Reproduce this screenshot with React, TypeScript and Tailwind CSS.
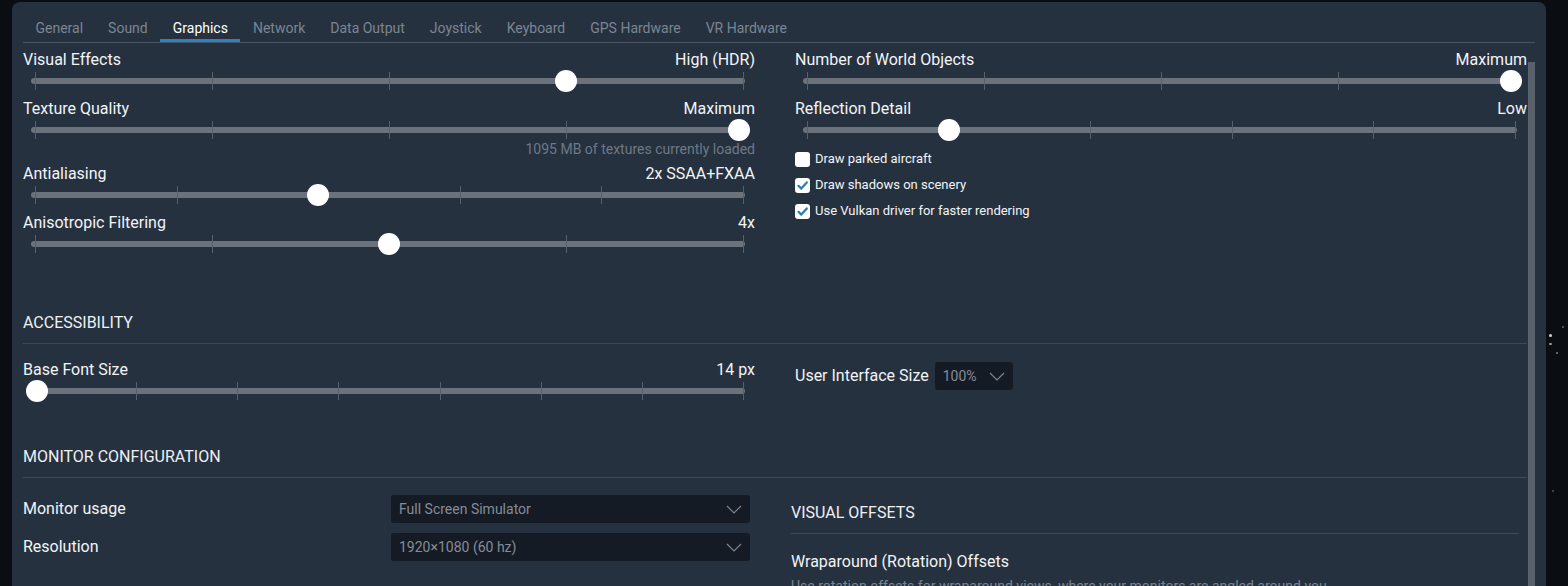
import React from 'react';

interface SliderProps {
  label: string;
  value: string;
  ticks: number;
  index: number;
  note?: string;
}

const tabs = ['General', 'Sound', 'Graphics', 'Network', 'Data Output', 'Joystick', 'Keyboard', 'GPS Hardware', 'VR Hardware'];

// track spans 708px between the first and last tick
const Slider: React.FC<SliderProps> = ({ label, value, ticks, index, note }) => {
  const step = 708 / (ticks - 1);
  const center = Math.min(Math.max(12 + index * step, 14), 716);
  return (
    <div className="flex flex-col">
      <div className="flex h-5 items-center justify-between text-[16px] leading-5 text-[#f2f4f6]">
        <span>{label}</span>
        <span>{value}</span>
      </div>
      <div className="relative h-[22px]">
        <div className="absolute left-[8px] right-[10px] top-[8px] h-[6px] rounded-full bg-[#6b727b]" />
        {Array.from({ length: ticks }).map((_, i) => (
          <div
            key={i}
            className="absolute top-[2px] h-[18px] w-px bg-[#56606c]"
            style={{ left: Math.round(12 + i * step) }}
          />
        ))}
        <div
          className="absolute top-0 h-[22px] w-[22px] rounded-full bg-white"
          style={{ left: Math.round(center - 11) }}
        />
      </div>
      {note && <div className="h-4 text-right text-[14px] leading-4 text-[#6e7884]">{note}</div>}
    </div>
  );
};

const Check: React.FC<{ label: string; checked?: boolean }> = ({ label, checked }) => (
  <div className="flex h-[26px] items-center gap-[5px] text-[13px] text-[#f2f4f6]">
    <div className="flex h-[15px] w-[15px] items-center justify-center rounded-[3px] bg-white">
      {checked && (
        <svg width="13" height="13" viewBox="0 0 13 13">
          <path d="M2.5 6.8 L5.3 9.6 L10.8 3.4" fill="none" stroke="#2b7bb4" strokeWidth="2.2" strokeLinecap="round" strokeLinejoin="round" />
        </svg>
      )}
    </div>
    <span>{label}</span>
  </div>
);

const Chevron = () => (
  <svg width="16" height="9" viewBox="0 0 16 9">
    <path d="M1 1 L8 8 L15 1" fill="none" stroke="#7d8590" strokeWidth="1.2" />
  </svg>
);

const Select: React.FC<{ text: string; className: string }> = ({ text, className }) => (
  <div className={`flex h-[28px] items-center justify-between rounded-[3px] bg-[#151b25] pl-[8px] pr-[8px] text-[14px] text-[#858c96] ${className}`}>
    <span>{text}</span>
    <Chevron />
  </div>
);

const SectionHeader: React.FC<{ title: string; className: string }> = ({ title, className }) => (
  <div className={`border-b border-[#3e4857] pb-[10px] text-[16px] uppercase leading-5 text-[#eef0f2] ${className}`}>
    {title}
  </div>
);

export default function App() {
  return (
    <div className="relative h-[586px] w-full overflow-hidden bg-[#0a0d12] font-['Roboto',sans-serif]">
      {/* faint city lights behind the window */}
      <div className="absolute left-[1549px] top-[334px] h-[3px] w-[3px] rounded-full bg-[#d8d2c0]" />
      <div className="absolute left-[1549px] top-[343px] h-[2px] w-[3px] rounded-full bg-[#a49a86]" />
      <div className="absolute left-[1556px] top-[352px] h-[2px] w-[2px] rounded-full bg-[#8a7f6a]" />
      <div className="absolute left-[1562px] top-[326px] h-[2px] w-[2px] rounded-full bg-[#6f6656]" />
      <div className="absolute left-[1552px] top-[490px] h-[2px] w-[2px] rounded-full bg-[#5e5648]" />

      <div className="ml-[12px] mt-[2px] flex h-[584px] w-[1534px] flex-col rounded-t-[8px] bg-[#263140]">
        <div className="mx-[11px] flex h-[41px] border-b border-[#4a5462]">
          {tabs.map((t) => (
            <div
              key={t}
              className={`h-full px-[12.5px] pt-[16px] text-[14px] leading-5 ${
                t === 'Graphics' ? 'border-b-[3px] border-[#2c82c0] text-white' : 'text-[#7b8592]'
              }`}
            >
              {t}
            </div>
          ))}
        </div>

        <div className="flex min-h-0 flex-1">
          <div className="w-[1504px] shrink-0 ml-[11px]">
            <div className="flex gap-[40px] pt-[7px]">
              <div className="flex w-[732px] flex-col gap-[7px]">
                <Slider label="Visual Effects" value="High (HDR)" ticks={5} index={3} />
                <Slider label="Texture Quality" value="Maximum" ticks={5} index={4} note="1095 MB of textures currently loaded" />
                <Slider label="Antialiasing" value="2x SSAA+FXAA" ticks={6} index={2} />
                <Slider label="Anisotropic Filtering" value="4x" ticks={5} index={2} />
              </div>
              <div className="flex w-[732px] flex-col">
                <div className="flex flex-col gap-[7px]">
                  <Slider label="Number of World Objects" value="Maximum" ticks={5} index={4} />
                  <Slider label="Reflection Detail" value="Low" ticks={6} index={1} />
                </div>
                <div className="flex flex-col pt-[5px]">
                  <Check label="Draw parked aircraft" />
                  <Check label="Draw shadows on scenery" checked />
                  <Check label="Use Vulkan driver for faster rendering" checked />
                </div>
              </div>
            </div>

            <SectionHeader title="Accessibility" className="mt-[58px]" />
            <div className="flex gap-[40px] pt-[16px]">
              <div className="w-[732px]">
                <Slider label="Base Font Size" value="14 px" ticks={8} index={0} />
              </div>
              <div className="flex w-[732px] items-center gap-[6px] pt-[2px] self-start text-[16px] text-[#f2f4f6]">
                <span>User Interface Size</span>
                <Select text="100%" className="w-[78px] text-[#757d88]" />
              </div>
            </div>

            <SectionHeader title="Monitor Configuration" className="mt-[45px]" />
            <div className="flex gap-[41px]">
              <div className="flex w-[727px] flex-col gap-[10px] pt-[17px]">
                <div className="flex items-center text-[16px] text-[#f2f4f6]">
                  <span className="w-[368px]">Monitor usage</span>
                  <Select text="Full Screen Simulator" className="w-[359px]" />
                </div>
                <div className="flex items-center text-[16px] text-[#f2f4f6]">
                  <span className="w-[368px]">Resolution</span>
                  <Select text="1920×1080 (60 hz)" className="w-[359px]" />
                </div>
              </div>
              <div className="flex w-[728px] flex-col pt-[25px]">
                <SectionHeader title="Visual Offsets" className="" />
                <div className="mt-[18px] text-[16px] leading-5 text-[#f2f4f6]">Wraparound (Rotation) Offsets</div>
                <div className="mt-[6px] text-[14px] leading-4 text-[#7a838e]">
                  Use rotation offsets for wraparound views, where your monitors are angled around you.
                </div>
              </div>
            </div>
          </div>
          <div className="ml-[1px] mt-[19px] w-[7px] shrink-0 bg-[#59616c]" />
        </div>
      </div>
    </div>
  );
}
